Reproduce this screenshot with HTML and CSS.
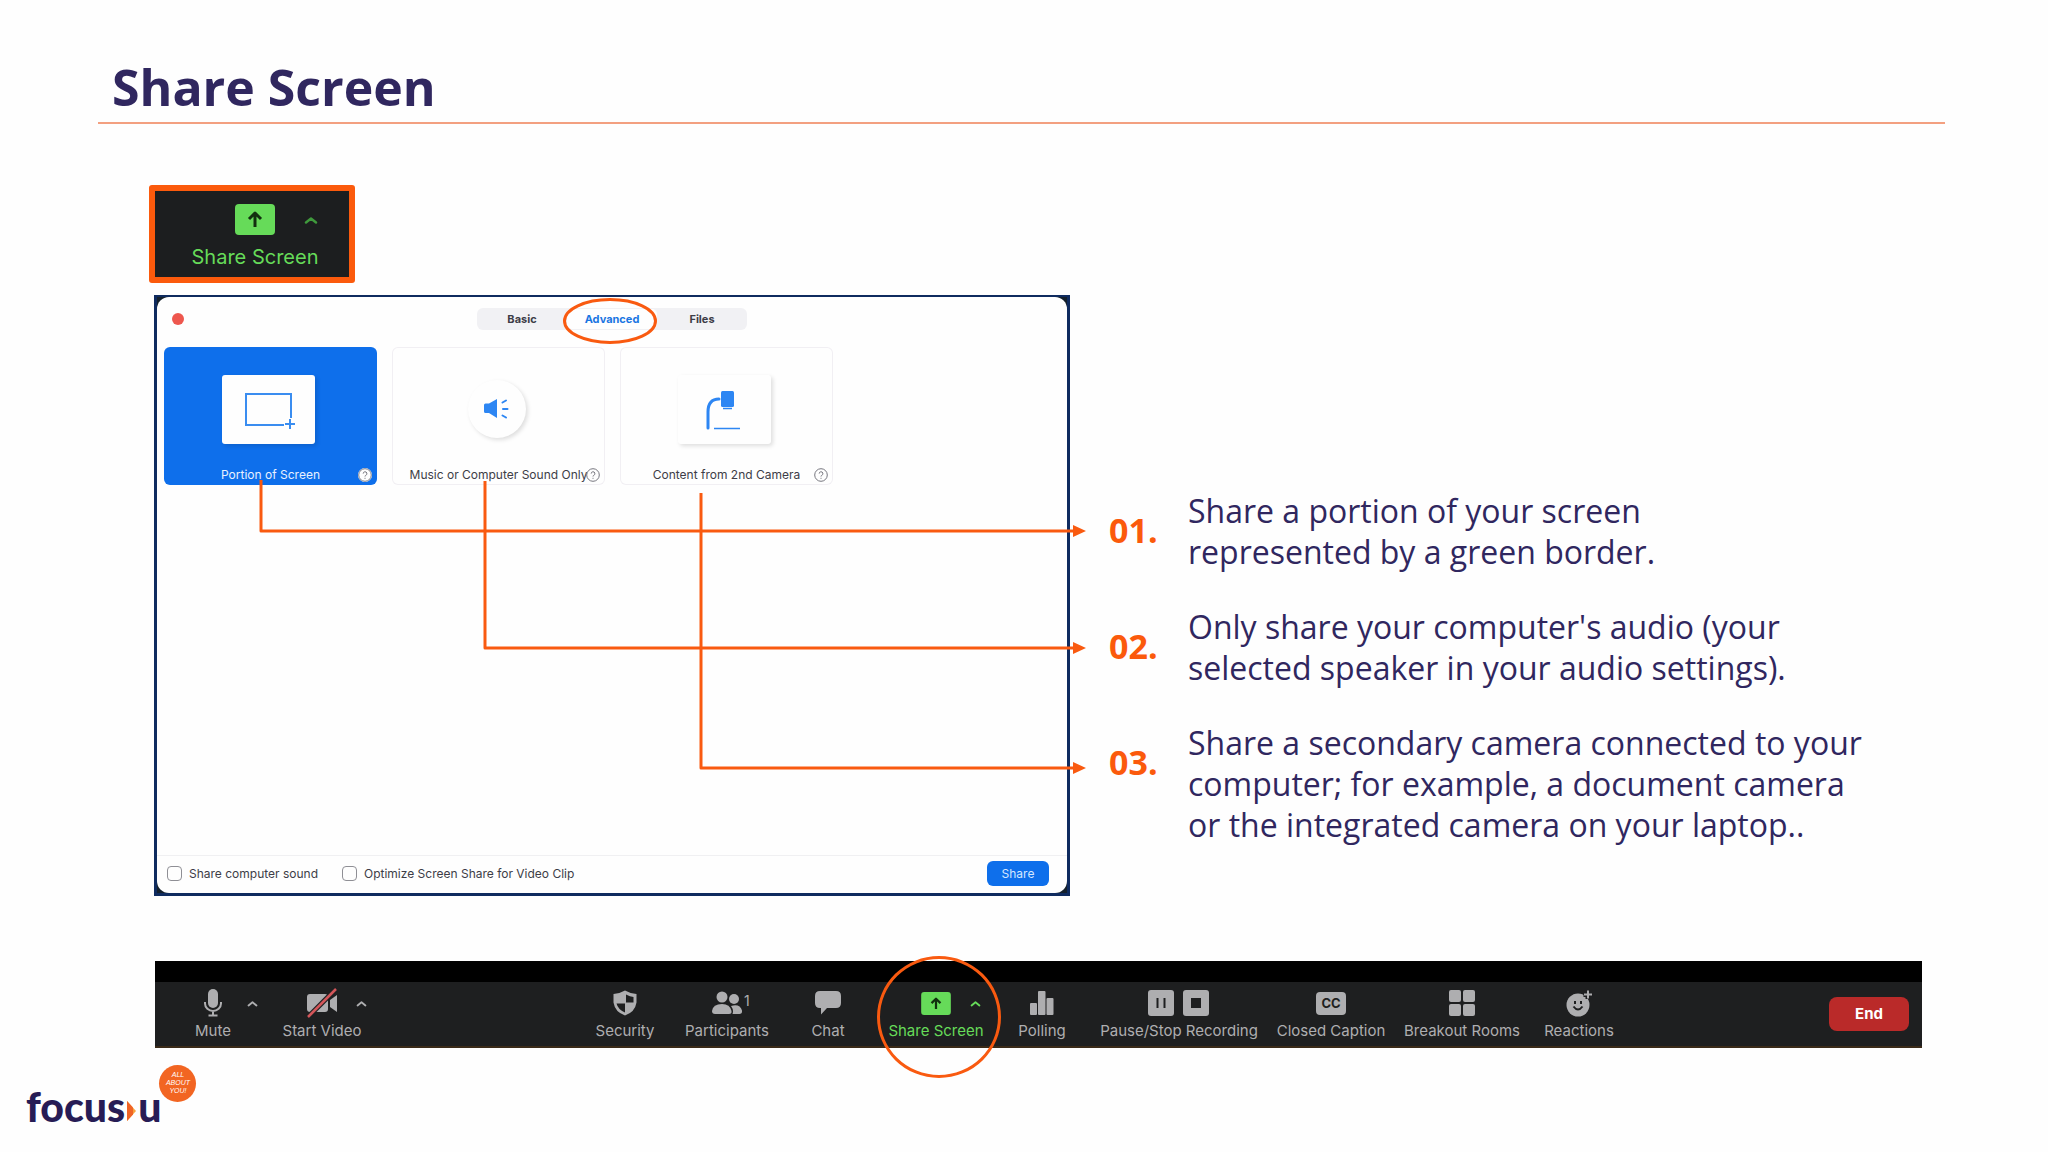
FILE: index.html
```html
<!DOCTYPE html>
<html lang="en">
<head>
<meta charset="utf-8">
<title>Share Screen</title>
<link rel="stylesheet" href="styles.css">
</head>
<body>
<svg class="defs" aria-hidden="true">
  <symbol id="caret" viewBox="0 0 14 8"><path d="M2 6.500 7 2.500l5 4" fill="none" stroke="currentColor" stroke-width="2.400" stroke-linecap="round" stroke-linejoin="round"/></symbol>
  <symbol id="share" viewBox="0 0 40 31"><rect width="40" height="31" rx="4" fill="#66db59"/><path d="M20 23V10M14 15l6-6 6 6" fill="none" stroke="#12300f" stroke-width="3" stroke-linejoin="round"/></symbol>
  <symbol id="help" viewBox="0 0 14 14"><circle class="help-ring" cx="7" cy="7" r="6.300"/><path class="help-mark" d="M5.200 5.600a1.850 1.850 0 1 1 2.600 1.700c-.6.300-.8.600-.8 1.200M7 9.800v1"/></symbol>
</svg>
<div class="slide">
  <header class="slide-header"><h1>Share Screen</h1></header>

  <main class="stage">
    <button class="callout" type="button">
      <svg class="callout-icon"><use href="#share"/></svg>
      <svg class="callout-caret"><use href="#caret"/></svg>
      <span>Share Screen</span>
    </button>

    <section class="explain">
      <div class="window">
        <div class="sheet">
          <div class="titlebar">
            <button class="close" type="button" aria-label="Close"></button>
            <nav class="tabs">
              <button type="button">Basic</button>
              <button class="active" type="button">Advanced</button>
              <button type="button">Files</button>
            </nav>
          </div>
          <div class="cards">
            <button class="card selected" type="button">
              <span class="plate"><svg viewBox="0 0 93 69" width="93" height="69"><path d="M62 50H24V19h45v24M68 44v10M63 49h10" fill="none" stroke="#3a8df0" stroke-width="2"/></svg></span>
              <span class="card-label">Portion of Screen</span>
              <svg class="help"><use href="#help"/></svg>
            </button>
            <button class="card" type="button">
              <span class="plate round"><svg viewBox="0 0 58 58" width="58" height="58"><path d="M16 25q0-1.500 1.500-1.500H21l8-4.500v19l-8-5h-3.500Q16 33 16 31.500z" fill="#2d86f3"/><path d="M34.500 22.500l3.500-2M35 29h4.500M34.500 35.500l3.500 2" stroke="#2d86f3" stroke-width="2" stroke-linecap="round"/></svg></span>
              <span class="card-label">Music or Computer Sound Only</span>
              <svg class="help"><use href="#help"/></svg>
            </button>
            <button class="card" type="button">
              <span class="plate"><svg viewBox="0 0 93 69" width="93" height="69"><path d="M30 53V37Q30 24 41 24" fill="none" stroke="#2d86f3" stroke-width="3" stroke-linecap="round"/><rect x="43" y="16" width="13" height="16" rx="1.500" fill="#2d86f3"/><path d="M45 33.500h9M36 53.500h26" stroke="#2d86f3" stroke-width="1.400"/></svg></span>
              <span class="card-label">Content from 2nd Camera</span>
              <svg class="help"><use href="#help"/></svg>
            </button>
          </div>
          <div class="options">
            <label><input type="checkbox">Share computer sound</label>
            <label><input type="checkbox">Optimize Screen Share for Video Clip</label>
            <button class="share-btn" type="button">Share</button>
          </div>
        </div>
      </div>

      <ol class="notes">
        <li><b>01.</b><p>Share a portion of your screen<br>represented by a green border.</p></li>
        <li><b>02.</b><p>Only share your computer's audio (your<br>selected speaker in your audio settings).</p></li>
        <li><b>03.</b><p>Share a secondary camera connected to your<br>computer; for example, a document camera<br>or the integrated camera on your laptop..</p></li>
      </ol>

      <svg class="connectors" width="940" height="601" aria-hidden="true">
        <g fill="none" stroke="#f95a10" stroke-width="3">
          <ellipse cx="456" cy="26" rx="45.500" ry="21.500"/>
          <path d="M107 185v51h814M331 186v167h590M547 198v275h374" stroke-linejoin="round"/>
        </g>
        <path d="M919 230l13 6-13 6zM919 347l13 6-13 6zM919 467l13 6-13 6z" fill="#f95a10"/>
      </svg>
    </section>
  </main>

  <div class="toolbar">
    <button type="button"><span class="icon"><svg viewBox="0 0 20 30" width="20" height="30"><rect x="5" y="1" width="10" height="19" rx="5"/><path d="M2 14v1.500a8 7.500 0 0 0 16 0V14M10 23v4M5.500 27.500h9" fill="none" stroke="currentColor" stroke-width="2"/></svg><svg class="caret"><use href="#caret"/></svg></span>Mute</button>
    <button type="button"><span class="icon"><svg viewBox="0 0 32 30" width="32" height="30"><rect x="1" y="6" width="21" height="18" rx="3"/><path d="M24 12l7-5v17l-7-5z"/><path d="M2 29 30 1" stroke="#1e1f20" stroke-width="5"/><path d="M2 29 30 1" stroke="#d3565a" stroke-width="2.500"/></svg><svg class="caret"><use href="#caret"/></svg></span>Start Video</button>
    <i></i>
    <button type="button"><span class="icon"><svg viewBox="0 0 24 26" width="24" height="26"><path d="M12 .500Q17 3.500 23.500 4v8.500Q22 22 12 25.500 2 22 .500 12.500V4Q7 3.500 12 .500z"/><path d="M13 4.500q4 2 7.500 2.500v5.500H13zM12 13.500v9Q5 19.500 3.500 13.500z" fill="#1e1f20"/></svg></span>Security</button>
    <button type="button"><span class="icon"><svg viewBox="0 0 30 24" width="30" height="24"><circle cx="10" cy="6" r="5.500"/><circle cx="22" cy="8" r="5"/><path d="M0 20q1-7 10-7 8 0 9.500 7 .5 3-2.500 3H3q-3 0-3-3z"/><path d="M19 15q9-2.500 11 4.500.500 3.500-2.500 3.500H20.500q1.500-4-1.500-8z"/></svg><sup class="count">1</sup></span>Participants</button>
    <button type="button"><span class="icon"><svg viewBox="0 0 26 24" width="26" height="24"><path d="M5 0h16q5 0 5 5v7q0 5-5 5h-9l-6 6.500V17H5q-5 0-5-5V5q0-5 5-5z"/></svg></span>Chat</button>
    <button class="sharing" type="button"><span class="icon"><svg width="30" height="23"><use href="#share"/></svg><svg class="caret"><use href="#caret"/></svg></span>Share Screen<span class="ring"></span></button>
    <button type="button"><span class="icon"><svg viewBox="0 0 24 24" width="24" height="24"><rect y="12" width="7" height="12" rx="1"/><rect x="8" width="7.500" height="24" rx="1"/><rect x="16.500" y="7" width="7" height="17" rx="1"/></svg></span>Polling</button>
    <button type="button"><span class="icon"><svg viewBox="0 0 62 26" width="62" height="26"><rect width="26" height="26" rx="3"/><rect x="35" width="26" height="26" rx="3"/><path d="M9.500 8v10M16.500 8v10" stroke="#1e1f20" stroke-width="2"/><rect x="43" y="8" width="10" height="10" fill="#1e1f20"/></svg></span>Pause/Stop Recording</button>
    <button type="button"><span class="icon"><span class="cc">CC</span></span>Closed Caption</button>
    <button type="button"><span class="icon"><svg viewBox="0 0 26 26" width="26" height="26"><rect width="12" height="12" rx="2"/><rect x="14" width="12" height="12" rx="2"/><rect y="14" width="12" height="12" rx="2"/><rect x="14" y="14" width="12" height="12" rx="2"/></svg></span>Breakout Rooms</button>
    <button type="button"><span class="icon"><svg viewBox="0 0 28 28" width="28" height="28"><circle cx="13" cy="16" r="11.500"/><path d="M10 12v3M16 12v3M8.500 17.500q4.500 6 9 0" fill="none" stroke="#1e1f20" stroke-width="2"/><path d="M23 1v9M18.500 5.500h9" stroke="#1e1f20" stroke-width="5"/><path d="M23 1.500v8M19 5.500h8" stroke="currentColor" stroke-width="2"/></svg></span>Reactions</button>
    <i></i>
    <button class="end" type="button">End</button>
  </div>

  <footer class="brand">
    <span class="wordmark">focus<svg viewBox="0 0 9 20" width="9" height="20"><path d="M0 0l9 10-9 10z" fill="#f9a13a"/><path d="M0 0l6 6.500v7L0 20z" fill="#ef6426"/></svg>u</span>
    <span class="seal">ALL<br>ABOUT<br>YOU!</span>
  </footer>
</div>
</body>
</html>
```
FILE: styles.css
```css
* { box-sizing: border-box; }
body {
  margin: 0;
  background: #fefefe;
  color: #30275f;
  font-family: "Open Sans", "Noto Sans", sans-serif;
}
button {
  border: 0;
  padding: 0;
  background: none;
  color: inherit;
  font: inherit;
}
.defs { display: none; }
.slide {
  min-height: 100vh;
  display: flex;
  flex-direction: column;
}

/* heading */
.slide-header {
  margin: 0 103px 0 98px;
  padding: 52px 14px 0;
  border-bottom: 2px solid #f3a080;
}
h1 {
  margin: 0;
  font-size: 50px;
  line-height: 70px;
  font-weight: 700;
}

/* highlighted toolbar button */
.stage { padding: 61px 127px 0 149px; }
.callout {
  position: relative;
  display: flex;
  flex-direction: column;
  align-items: center;
  gap: 8px;
  width: 206px;
  height: 98px;
  padding: 13px 0 0 6px;
  border: 6px solid #fb5a0c;
  border-radius: 3px;
  background: #1c1e1f;
  color: #66db59;
  font: 20px/28px Inter, sans-serif;
}
.callout-icon { width: 40px; height: 31px; }
.callout-caret {
  position: absolute;
  top: 25px;
  right: 31px;
  width: 14px;
  height: 8px;
  color: #3f9a3c;
}

/* share dialog and its notes */
.explain {
  position: relative;
  display: grid;
  grid-template-columns: 916px 1fr;
  gap: 39px;
  margin: 12px 0 0 5px;
}
.connectors {
  position: absolute;
  top: 0;
  left: 0;
  pointer-events: none;
}
.window {
  border: 3px solid #0f2b5f;
  border-top-width: 2px;
  background: #14202c;
}
.sheet {
  display: flex;
  flex-direction: column;
  height: 596px;
  border-radius: 12px;
  background: #fefefe;
  color: #3d3d47;
  font: 12px/18px Inter, sans-serif;
}
.titlebar {
  display: grid;
  grid-template-columns: 1fr 270px 1fr;
  align-items: center;
  padding: 11px 15px 17px;
}
.close {
  width: 12px;
  height: 12px;
  border-radius: 50%;
  background: #ee574e;
}
.tabs {
  display: grid;
  grid-template-columns: repeat(3, 1fr);
  height: 22px;
  border-radius: 6px;
  background: #f1f1f4;
  font-size: 11px;
  font-weight: 700;
}
.tabs .active {
  margin: 1px 0;
  border-radius: 5px;
  background: #fefefe;
  color: #1a76e2;
}
.cards {
  display: flex;
  gap: 15px;
  flex: 1;
  align-items: flex-start;
  padding: 0 7px;
}
.card {
  position: relative;
  display: flex;
  flex-direction: column;
  align-items: center;
  justify-content: space-between;
  width: 213px;
  height: 138px;
  padding: 28px 0 0;
  border-radius: 6px;
  box-shadow: inset 0 0 0 1px #f1eff3;
}
.card.selected {
  background: #0e6feb;
  box-shadow: none;
  color: #e8f1ff;
}
.plate {
  height: 69px;
  margin-right: 4px;
  border-radius: 3px;
  background: #fefefe;
  box-shadow: 2px 2px 4px rgba(0, 0, 0, 0.13);
}
.plate svg { display: block; }
.plate.round {
  height: 58px;
  margin-top: 5px;
  border-radius: 50%;
}
.card-label { padding-bottom: 1px; }
.help {
  position: absolute;
  right: 5px;
  bottom: 3px;
  width: 14px;
  height: 14px;
}
.help-ring { fill: none; stroke: #77777f; }
.help-mark { fill: none; stroke: #77777f; }
.selected .help { border-radius: 50%; background: #fefefe; }
.selected .help-ring { stroke: none; }
.options {
  display: flex;
  align-items: center;
  gap: 24px;
  height: 38px;
  padding: 0 18px 2px 10px;
  border-top: 1px solid #f0f0f2;
}
.options label {
  display: flex;
  align-items: center;
  gap: 7px;
}
.options input {
  appearance: none;
  width: 15px;
  height: 15px;
  margin: 0;
  border: 1px solid #8f8f95;
  border-radius: 4px;
}
.share-btn {
  width: 62px;
  height: 25px;
  margin-left: auto;
  border-radius: 6px;
  background: #0e6feb;
  color: #d5e7ff;
}

.notes {
  display: flex;
  flex-direction: column;
  gap: 34px;
  margin: 0;
  padding: 195px 0 0;
  list-style: none;
  font-size: 32px;
  line-height: 41px;
}
.notes li {
  display: grid;
  grid-template-columns: 79px 1fr;
}
.notes b {
  padding-top: 20px;
  color: #fb5a0c;
  font-size: 34px;
}
.notes p { margin: 0; white-space: nowrap; }

/* meeting toolbar */
.toolbar {
  display: grid;
  grid-template-columns: 116px 102px 1fr 102px 102px 100px 116px 96px 178px 126px 136px 98px 1fr 80px;
  margin: 65px 126px 0 155px;
  padding: 0 13px 0 0;
  height: 87px;
  border-top: 21px solid #000;
  border-bottom: 2px solid #3a2a18;
  background: #1e1f20;
  color: #aeaeb0;
  font: 15px/20px Inter, sans-serif;
}
.toolbar i:first-of-type { margin-right: 2px; }
.toolbar button {
  position: relative;
  display: flex;
  flex-direction: column;
  align-items: center;
  padding-top: 5px;
  white-space: nowrap;
}
.toolbar svg { fill: currentColor; }
.icon {
  position: relative;
  display: flex;
  align-items: center;
  justify-content: center;
  height: 32px;
  margin-bottom: 2px;
}
.caret {
  position: absolute;
  left: calc(50% + 34px);
  top: 13px;
  width: 11px;
  height: 7px;
}
.count {
  position: absolute;
  left: 32px;
  top: 6px;
  font-size: 14px;
  line-height: 16px;
}
.cc {
  width: 30px;
  height: 23px;
  border-radius: 4px;
  background: #aeaeb0;
  color: #1e1f20;
  font-size: 13px;
  line-height: 23px;
  font-weight: 700;
  text-align: center;
}
.toolbar .sharing { color: #66db59; }
.ring {
  position: absolute;
  top: -26px;
  left: -1px;
  width: 124px;
  height: 122px;
  border: 3px solid #f95a10;
  border-radius: 50%;
}
.toolbar .end {
  align-self: center;
  justify-content: center;
  height: 34px;
  padding: 0;
  border-radius: 8px;
  background: #ba2a29;
  color: #fff;
  font-weight: 700;
}

/* brand mark */
.brand {
  display: flex;
  align-items: flex-start;
  padding: 17px 0 0 26px;
  color: #271c55;
}
.wordmark {
  display: flex;
  align-items: center;
  gap: 2px;
  padding-top: 18px;
  font: 900 41px/48px Lato, sans-serif;
}
.wordmark svg { margin-top: 8px; }
.seal {
  width: 37px;
  height: 37px;
  margin-left: -2px;
  padding-top: 6px;
  border-radius: 50%;
  background: #f26522;
  color: #fff;
  font: italic 7px/8px "Liberation Sans", sans-serif;
  text-align: center;
}
```
